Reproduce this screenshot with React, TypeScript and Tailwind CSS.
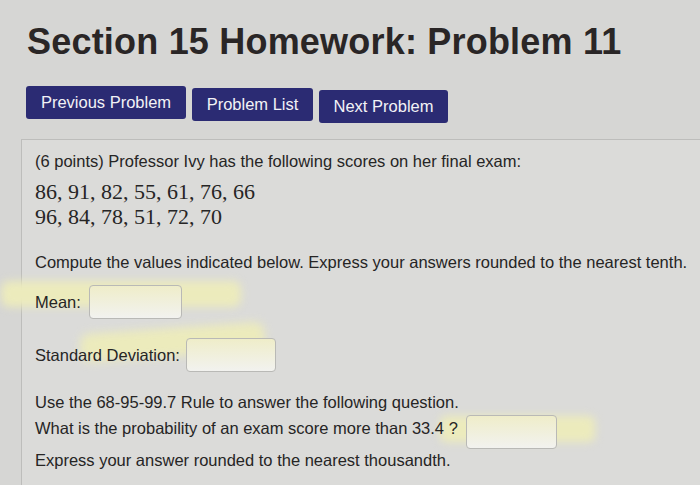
import React from 'react';

const navButtons = [
    { label: 'Previous Problem', width: 'w-[160px]', offset: 'mt-0' },
    { label: 'Problem List', width: 'w-[121px]', offset: 'mt-[2px]' },
    { label: 'Next Problem', width: 'w-[129px]', offset: 'mt-[4px]' },
];

const AnswerBox: React.FC<{ width: string }> = ({ width }) => (
    <input
        type="text"
        className={`relative z-10 ${width} h-[34px] rounded-[4px] border border-[#b9b9b6] bg-gradient-to-b from-[#efedc9] to-[#f2f2ef] outline-none`}
    />
);

const App: React.FC = () => {
    return (
        <div className="relative w-[700px] h-[485px] overflow-hidden bg-[#d6d6d4] font-['Liberation_Sans',Arial,sans-serif] text-[#262525]">
            <h1 className="pl-[27px] pt-[22px] text-[36px] leading-[40px] font-bold text-[#2a2626] tracking-[0.2px]">
                Section 15 Homework: Problem 11
            </h1>

            <div className="flex items-start gap-[6px] pl-[26px] mt-[24px]">
                {navButtons.map((b) => (
                    <button
                        key={b.label}
                        className={`${b.width} ${b.offset} h-[33px] rounded-[3px] bg-[#2b2b73] text-[#f2f2f6] text-[16.5px] flex items-center justify-center`}
                    >
                        {b.label}
                    </button>
                ))}
            </div>

            <div className="mt-[16px] ml-[21px] h-[360px] border-t border-l border-[#bdbdbb] bg-[#dbdbd9] pl-[13px] text-[16.5px]">
                <p className="mt-[10px] leading-[22px]">
                    (6 points) Professor Ivy has the following scores on her final exam:
                </p>

                <div className="mt-[7px] font-['Liberation_Serif','Times_New_Roman',serif] text-[22px] leading-[25px]">
                    <div>86, 91, 82, 55, 61, 76, 66</div>
                    <div>96, 84, 78, 51, 72, 70</div>
                </div>

                <p className="mt-[22px] leading-[22px]">
                    Compute the values indicated below. Express your answers rounded to the nearest tenth.
                </p>

                <div className="relative mt-[12px] flex items-center gap-[8px] h-[34px]">
                    <div className="pointer-events-none absolute left-[-34px] top-[-4px] w-[240px] h-[26px] rounded-[8px] bg-[#ecebbc] blur-[4px]" />
                    <span className="relative z-10">Mean:</span>
                    <AnswerBox width="w-[93px]" />
                </div>

                <div className="relative mt-[19px] flex items-center gap-[6px] h-[34px]">
                    <div className="pointer-events-none absolute left-[45px] top-[-10px] w-[185px] h-[28px] rounded-[10px] bg-[#ecebbc] blur-[5px] rotate-[-4deg]" />
                    <span className="relative z-10">Standard Deviation:</span>
                    <AnswerBox width="w-[90px]" />
                </div>

                <p className="mt-[17px] leading-[26px]">
                    Use the 68-95-99.7 Rule to answer the following question.
                </p>

                <div className="relative flex items-center gap-[8px] h-[34px]">
                    <div className="pointer-events-none absolute left-[405px] top-[1px] w-[155px] h-[26px] rounded-[6px] bg-[#ecebbc] blur-[4px]" />
                    <span className="relative z-10 -mt-[8px]">What is the probability of an exam score more than 33.4 ?</span>
                    <AnswerBox width="w-[91px]" />
                </div>

                <p className="leading-[22px]">
                    Express your answer rounded to the nearest thousandth.
                </p>
            </div>
        </div>
    );
};

export default App;
